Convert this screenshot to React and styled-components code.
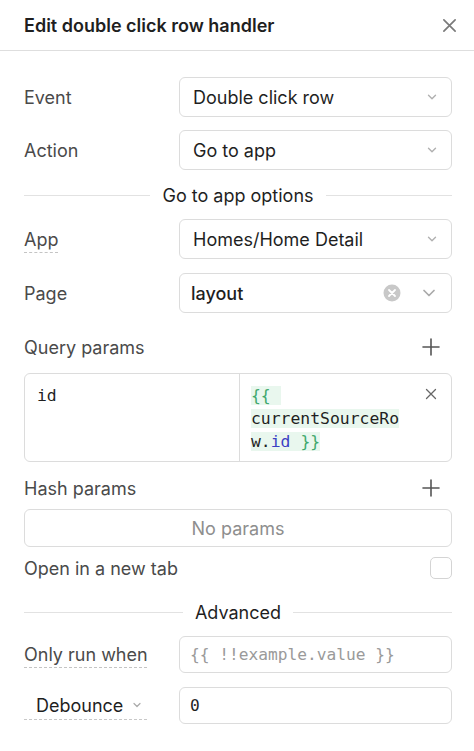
import React from 'react'
import styled, { createGlobalStyle } from 'styled-components'

const Global = createGlobalStyle`
  html, body { margin: 0; padding: 0; background: #fff; }
  body { font-family: Inter, "Noto Sans", sans-serif; color: #1f1f1f; }
`

const Panel = styled.div`
  width: 474px;
  height: 751px;
  overflow: hidden;
  background: #fff;
`

const Header = styled.div`
  height: 50px;
  display: flex;
  align-items: center;
  justify-content: space-between;
  padding: 0 14px 0 24px;
  border-bottom: 1px solid #dedede;
`

const Title = styled.h1`
  margin: 0;
  font-size: 18px;
  font-weight: 600;
  color: #1f1f1f;
`

const IconButton = styled.button`
  border: none;
  background: none;
  padding: 0;
  width: ${p => p.size || 22}px;
  height: ${p => p.size || 22}px;
  display: flex;
  align-items: center;
  justify-content: center;
`

const Body = styled.div`
  padding: 26px 22px 0 24px;
  display: flex;
  flex-direction: column;
`

const Row = styled.div`
  display: grid;
  grid-template-columns: 155px 1fr;
  align-items: center;
  margin-bottom: ${p => p.gap ?? 13}px;
`

const Label = styled.span`
  font-size: 18px;
  color: #4a4a4a;
  justify-self: start;
  ${p => p.dashed && `
    text-decoration: underline dashed #c4c4c4;
    text-underline-offset: 6px;
    text-decoration-thickness: 1px;
  `}
`

const Select = styled.div`
  height: ${p => p.h || 40}px;
  box-sizing: border-box;
  border: 1px solid #dcdcdc;
  border-radius: 6px;
  display: flex;
  align-items: center;
  padding: 0 12px 0 ${p => p.pl || 13}px;
  font-size: 18px;
  color: #1f1f1f;
`

const Value = styled.span`
  flex: 1;
  font-weight: ${p => p.bold ? 500 : 400};
`

const Divider = styled.div`
  display: flex;
  align-items: center;
  gap: 12px;
  height: 24px;
  margin-bottom: 12px;
  font-size: 18px;
  color: #1f1f1f;
  &::before, &::after {
    content: '';
    flex: 1;
    height: 1px;
    background: #e2e2e2;
  }
`

const SectionHead = styled.div`
  display: flex;
  align-items: center;
  justify-content: space-between;
  height: 28px;
  padding-right: 11px;
  margin-bottom: ${p => p.mb ?? 12}px;
`

const ParamTable = styled.div`
  display: grid;
  grid-template-columns: 214px 1fr;
  border: 1px solid #dcdcdc;
  border-radius: 6px;
  height: 89px;
  box-sizing: border-box;
  margin-bottom: 12px;
`

const Cell = styled.div`
  padding: 10px 12px 0 12px;
  font-family: "DejaVu Sans Mono", monospace;
  font-size: 16.4px;
  line-height: 23px;
  color: #1f1f1f;
  position: relative;
  & + & { border-left: 1px solid #dcdcdc; padding-left: 11px; }
`

const Code = styled.div`
  width: 152px;
  span.hl { background: #e9f7ee; }
`

const Brace = styled.span`
  color: #3fa86d;
`

const Prop = styled.span`
  color: #3b3fc4;
`

const CellClose = styled(IconButton)`
  position: absolute;
  right: 12px;
  top: 12px;
`

const Empty = styled.div`
  height: 38px;
  box-sizing: border-box;
  border: 1px solid #dcdcdc;
  border-radius: 6px;
  display: flex;
  align-items: center;
  justify-content: center;
  font-size: 18px;
  color: #8e8e8e;
  margin-bottom: 10px;
`

const CheckRow = styled.div`
  display: flex;
  align-items: center;
  justify-content: space-between;
  height: 22px;
  margin-bottom: 21px;
`

const Checkbox = styled.span`
  width: 22px;
  height: 22px;
  box-sizing: border-box;
  border: 1px solid #d4d4d4;
  border-radius: 5px;
`

const MonoInput = styled(Select)`
  font-family: "DejaVu Sans Mono", monospace;
  font-size: 16.2px;
  padding-left: 10px;
  color: ${p => p.placeholder ? '#9a9a9a' : '#1f1f1f'};
`

const DebounceLabel = styled.span`
  justify-self: start;
  display: flex;
  align-items: center;
  gap: 8px;
  padding: 0 4px 3px 12px;
  margin-top: 3px;
  font-size: 18px;
  color: #1f1f1f;
  border-bottom: 1px dashed #c8c8c8;
`

const Chevron = ({ size = 14, color = '#b0b0b0', w = 1.6 }) => (
  <svg width={size} height={size} viewBox="0 0 16 16" fill="none">
    <path d="M4 6l4 4 4-4" stroke={color} strokeWidth={w} strokeLinecap="round" strokeLinejoin="round" />
  </svg>
)

const Cross = ({ size = 16, color = '#777', w = 1.8 }) => (
  <svg width={size} height={size} viewBox="0 0 16 16" fill="none">
    <path d="M2 2l12 12M14 2L2 14" stroke={color} strokeWidth={w} strokeLinecap="round" />
  </svg>
)

const Plus = () => (
  <svg width="18" height="18" viewBox="0 0 18 18" fill="none">
    <path d="M9 1v16M1 9h16" stroke="#555" strokeWidth="1.6" strokeLinecap="round" />
  </svg>
)

const ClearIcon = () => (
  <svg width="18" height="18" viewBox="0 0 18 18">
    <circle cx="9" cy="9" r="8.5" fill="#c8c8c8" />
    <path d="M6 6l6 6M12 6l-6 6" stroke="#fff" strokeWidth="1.8" strokeLinecap="round" />
  </svg>
)

const SelectField = ({ value }) => (
  <Select>
    <Value>{value}</Value>
    <Chevron />
  </Select>
)

export default function App() {
  return (
    <Panel>
      <Global />
      <Header>
        <Title>Edit double click row handler</Title>
        <IconButton size={22}><Cross size={15} color="#7a7a7a" w={1.8} /></IconButton>
      </Header>
      <Body>
        <Row>
          <Label>Event</Label>
          <SelectField value="Double click row" />
        </Row>
        <Row>
          <Label>Action</Label>
          <SelectField value="Go to app" />
        </Row>
        <Divider>Go to app options</Divider>
        <Row gap={14}>
          <Label dashed>App</Label>
          <SelectField value="Homes/Home Detail" />
        </Row>
        <Row gap={20}>
          <Label>Page</Label>
          <Select pl={11}>
            <Value bold>layout</Value>
            <ClearIcon />
            <span style={{ width: 18 }} />
            <Chevron size={20} color="#aaa" w={1.4} />
          </Select>
        </Row>
        <SectionHead>
          <Label>Query params</Label>
          <IconButton size={20}><Plus /></IconButton>
        </SectionHead>
        <ParamTable>
          <Cell>id</Cell>
          <Cell>
            <Code>
              <span className="hl"><Brace>{'{{'}</Brace>&nbsp;</span><br />
              <span className="hl">currentSourceRo</span><br />
              <span className="hl">w.<Prop>id</Prop> <Brace>{'}}'}</Brace></span>
            </Code>
            <CellClose size={16}><Cross size={12} color="#666" w={1.7} /></CellClose>
          </Cell>
        </ParamTable>
        <SectionHead mb={7}>
          <Label>Hash params</Label>
          <IconButton size={20}><Plus /></IconButton>
        </SectionHead>
        <Empty>No params</Empty>
        <CheckRow>
          <Label>Open in a new tab</Label>
          <Checkbox />
        </CheckRow>
        <Divider>Advanced</Divider>
        <Row gap={14}>
          <Label dashed>Only run when</Label>
          <MonoInput h={37} placeholder>{'{{ !!example.value }}'}</MonoInput>
        </Row>
        <Row>
          <DebounceLabel>Debounce <Chevron size={12} color="#aaa" /></DebounceLabel>
          <MonoInput h={37}>0</MonoInput>
        </Row>
      </Body>
    </Panel>
  )
}
